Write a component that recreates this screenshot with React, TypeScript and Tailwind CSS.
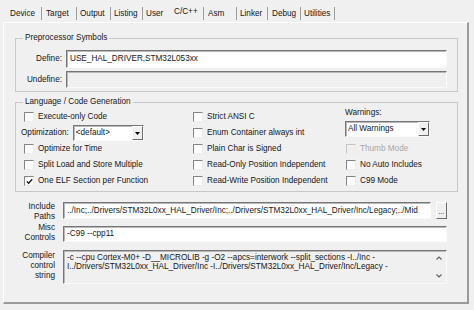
import React from 'react';

type Tab = { label: string; w: string; pl: string; sep: boolean; active?: boolean };

const tabs: Tab[] = [
  { label: 'Device', w: 'w-[37px]', pl: 'pl-[5px]', sep: true },
  { label: 'Target', w: 'w-[35px]', pl: 'pl-[4px]', sep: true },
  { label: 'Output', w: 'w-[34px]', pl: 'pl-[3px]', sep: true },
  { label: 'Listing', w: 'w-[32px]', pl: 'pl-[3px]', sep: true },
  { label: 'User', w: 'w-[27px]', pl: 'pl-[3px]', sep: false },
  { label: 'C/C++', w: 'w-[34px]', pl: 'pl-[4px]', sep: true, active: true },
  { label: 'Asm', w: 'w-[33px]', pl: 'pl-[4px]', sep: true },
  { label: 'Linker', w: 'w-[31px]', pl: 'pl-[3px]', sep: true },
  { label: 'Debug', w: 'w-[33px]', pl: 'pl-[4px]', sep: true },
  { label: 'Utilities', w: 'w-[34px]', pl: 'pl-[3px]', sep: true },
];

const sunken =
  'border border-t-[#767676] border-l-[#767676] border-r-[#fafafa] border-b-[#fafafa] shadow-[inset_1px_1px_0_#b9b9b9]';

const Check = ({ checked, disabled }: { checked?: boolean; disabled?: boolean }) => (
  <span
    className={`w-[10px] h-[10px] shrink-0 flex items-center justify-center border border-t-[#858585] border-l-[#858585] border-r-[#ececec] border-b-[#ececec] ${
      disabled ? 'bg-[#f0f0f0] border-t-[#c4c4c4] border-l-[#c4c4c4]' : 'bg-white'
    }`}
  >
    {checked && (
      <svg width="7" height="7" viewBox="0 0 7 7">
        <path d="M0.8 3.4 L2.7 5.3 L6.2 1.2" stroke="#1c1c1c" strokeWidth="1.4" fill="none" />
      </svg>
    )}
  </span>
);

const CheckRow = ({ label, checked, disabled }: { label: string; checked?: boolean; disabled?: boolean }) => (
  <div className="h-[16px] flex items-center gap-[4px]">
    <Check checked={checked} disabled={disabled} />
    <span className={disabled ? 'text-[#a6a6a6]' : ''}>{label}</span>
  </div>
);

const Combo = ({ value, w }: { value: string; w: string }) => (
  <div className={`${w} h-[16px] flex bg-white ${sunken}`}>
    <span className="flex-1 pl-[2px] flex items-center">{value}</span>
    <span className="w-[11px] h-full bg-[#f0f0f0] border border-t-white border-l-white border-r-[#6a6a6a] border-b-[#6a6a6a] flex items-center justify-center">
      <svg width="5" height="3" viewBox="0 0 5 3">
        <path d="M0 0H5L2.5 3Z" fill="#000" />
      </svg>
    </span>
  </div>
);

export default function App() {
  return (
    <div className="w-[474px] h-[310px] overflow-hidden bg-[#f0f0f0] text-[8.2px] leading-[10px] text-[#161616] font-['Liberation_Sans',Arial,sans-serif]">
      {/* tab strip */}
      <div className="h-[22px] flex items-start pl-[5px] pt-[7px]">
        {tabs.map((t) => (
          <div
            key={t.label}
            className={`${t.w} ${t.pl} h-[13px] flex items-center shrink-0 ${t.sep ? 'border-r border-[#9c9c9c]' : ''} ${
              t.active ? 'pb-[3px]' : ''
            }`}
          >
            {t.label}
          </div>
        ))}
      </div>

      {/* page */}
      <div className="ml-[3px] w-[466px] h-[282px] border-t border-l border-t-white border-l-white border-r-2 border-b-2 border-r-[#9a9a9a] border-b-[#9a9a9a]">
        <div className="pl-[11px] pt-[10px]">
          <fieldset className="w-[443px] border border-[#c8c8c8] pb-[3px]">
            <legend className="ml-[7px] px-[2px]">Preprocessor Symbols</legend>
            <div className="mt-[7px] grid grid-cols-[46px_381px] gap-x-[4px] gap-y-[3px] items-center">
              <div className="text-right">Define:</div>
              <div className={`h-[18px] bg-white pl-[3px] flex items-center ${sunken}`}>USE_HAL_DRIVER,STM32L053xx</div>
              <div className="text-right">Undefine:</div>
              <div className={`h-[17px] bg-[#f0f0f0] ${sunken}`} />
            </div>
          </fieldset>

          <fieldset className="mt-[5px] w-[443px] border border-[#c8c8c8] pb-[2px]">
            <legend className="ml-[7px] px-[2px]">Language / Code Generation</legend>
            <div className="mt-[2px] flex">
              <div className="w-[177px]">
                <div className="pl-[8px]">
                  <CheckRow label="Execute-only Code" />
                </div>
                <div className="h-[16px] pl-[5px] flex items-center gap-[4px]">
                  <span>Optimization:</span>
                  <Combo value="<default>" w="w-[71px]" />
                </div>
                <div className="pl-[8px]">
                  <CheckRow label="Optimize for Time" />
                  <CheckRow label="Split Load and Store Multiple" />
                  <CheckRow label="One ELF Section per Function" checked />
                </div>
              </div>
              <div className="w-[152px]">
                <CheckRow label="Strict ANSI C" />
                <CheckRow label="Enum Container always int" />
                <CheckRow label="Plain Char is Signed" />
                <CheckRow label="Read-Only Position Independent" />
                <CheckRow label="Read-Write Position Independent" />
              </div>
              <div className="flex-1">
                <div className="h-[12px] leading-[8px]">Warnings:</div>
                <Combo value="All Warnings" w="w-[85px]" />
                <div className="mt-[4px] pl-[1px]">
                  <CheckRow label="Thumb Mode" disabled />
                  <CheckRow label="No Auto Includes" />
                  <CheckRow label="C99 Mode" />
                </div>
              </div>
            </div>
          </fieldset>
        </div>

        {/* compiler strings */}
        <div className="mt-[10px] flex flex-col">
          <div className="flex items-start">
            <div className="w-[51px] text-right">
              Include
              <br />
              Paths
            </div>
            <div className={`ml-[8px] w-[368px] h-[17px] bg-white pl-[3px] flex items-center whitespace-nowrap ${sunken}`}>
              ../Inc;../Drivers/STM32L0xx_HAL_Driver/Inc;../Drivers/STM32L0xx_HAL_Driver/Inc/Legacy;../Mid
            </div>
            <div className="ml-[5px] w-[11px] h-[17px] border border-t-white border-l-white border-r-[#6a6a6a] border-b-[#6a6a6a] flex items-end justify-center pb-[3px] text-[7px] leading-[6px]">
              ...
            </div>
          </div>

          <div className="mt-[1px] flex items-start">
            <div className="w-[51px] text-right">
              Misc
              <br />
              Controls
            </div>
            <div className={`ml-[8px] mt-[3px] w-[384px] h-[16px] bg-white pl-[3px] flex items-center ${sunken}`}>
              -C99 --cpp11
            </div>
          </div>

          <div className="mt-[7px] flex items-start">
            <div className="w-[51px] pt-[1px] text-right">
              Compiler
              <br />
              control
              <br />
              string
            </div>
            <div className={`ml-[8px] w-[384px] h-[34px] bg-[#f0f0f0] flex ${sunken}`}>
              <div className="flex-1 pl-[3px] pt-[2px] leading-[9px] whitespace-nowrap">
                -c --cpu Cortex-M0+ -D__MICROLIB -g -O2 --apcs=interwork --split_sections -I../Inc -
                <br />
                I../Drivers/STM32L0xx_HAL_Driver/Inc -I../Drivers/STM32L0xx_HAL_Driver/Inc/Legacy -
              </div>
              <div className="w-[14px] flex flex-col items-center justify-between py-[5px]">
                <svg width="6" height="4" viewBox="0 0 6 4">
                  <path d="M0.5 3.5L3 1L5.5 3.5" stroke="#606060" strokeWidth="1.2" fill="none" />
                </svg>
                <svg width="6" height="4" viewBox="0 0 6 4">
                  <path d="M0.5 0.5L3 3L5.5 0.5" stroke="#606060" strokeWidth="1.2" fill="none" />
                </svg>
              </div>
            </div>
          </div>
        </div>
      </div>
    </div>
  );
}
